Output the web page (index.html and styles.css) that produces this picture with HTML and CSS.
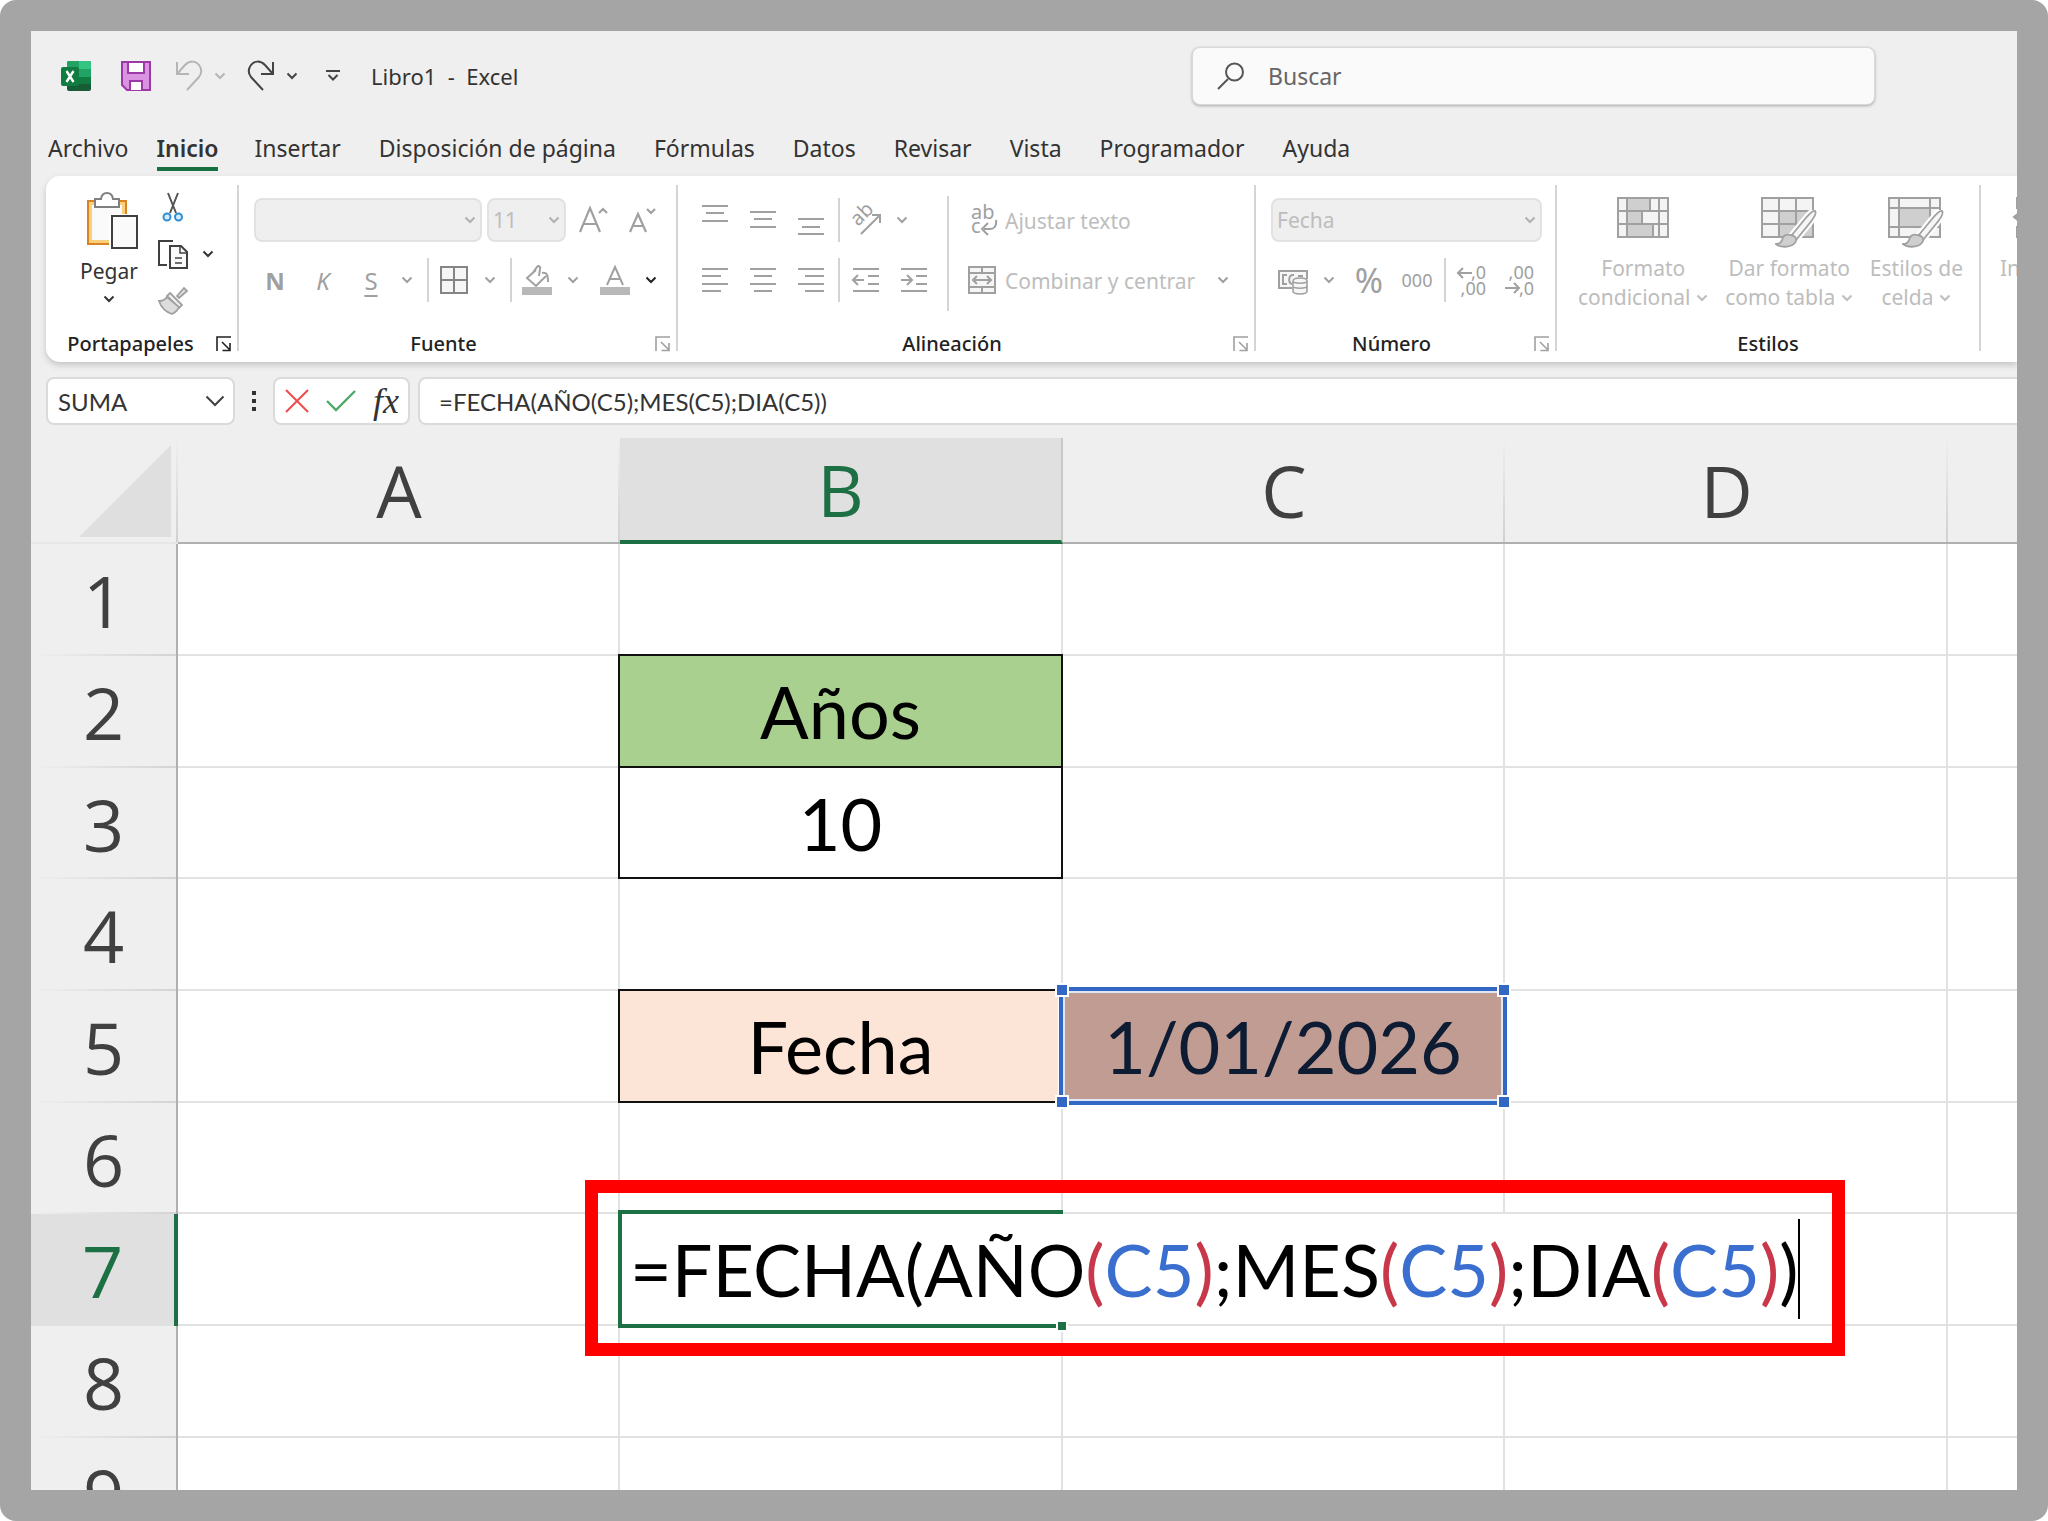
FILE: index.html
```html
<!DOCTYPE html>
<html lang="es">
<head>
    <meta charset="UTF-8">
    <meta name="viewport" content="width=device-width, initial-scale=1.0">
    <title>Libro1 - Excel</title>
    <link rel="stylesheet" href="styles.css">
</head>
<body>
    <!-- Shared icons -->
    <svg class="sprite" aria-hidden="true">
        <symbol id="chevron" viewBox="0 0 12 8"><path d="M1.5 1.5 6 6l4.500-4.500" fill="none" stroke="currentColor" stroke-width="2"/></symbol>
        <symbol id="launcher" viewBox="0 0 16 16"><path d="M1 15V1h14M6 6l8 8M14 7v7.500H6.500" fill="none" stroke="currentColor" stroke-width="1.600"/></symbol>
        <symbol id="brush" viewBox="0 0 42 38">
            <path d="M40 1c2 2-1 7-6 13L21 30l-5-4L30 9c5-6 8-9 10-8z" fill="#f6f6f6" stroke="#fff" stroke-width="6"/>
            <path d="M40 1c2 2-1 7-6 13L21 30l-5-4L30 9c5-6 8-9 10-8z" fill="#f6f6f6" stroke="#a0a0a0" stroke-width="1.800"/>
            <path d="M15 25c-4-1-7 1-8 5-1 3-3 4-6 4 5 4 17 4 20-3 1-3-2-6-6-6z" fill="#cfcfcf" stroke="#a0a0a0" stroke-width="1.800"/>
        </symbol>
    </svg>

    <div class="window">
        <header class="titlebar">
            <svg class="app-icon" width="32" height="32" viewBox="0 0 32 32" role="img" aria-label="Excel">
                <rect x="7" y="1" width="24" height="30" rx="2" fill="#185c37"/>
                <path d="M9 1h10v8H7V3a2 2 0 0 1 2-2z" fill="#21a366"/>
                <path d="M19 1h10a2 2 0 0 1 2 2v6H19z" fill="#33c481"/>
                <path d="M7 9h12v8H7z" fill="#107c41"/>
                <path d="M19 9h12v8H19z" fill="#21a366"/>
                <path d="M19 17h12v7H19z" fill="#107c41"/>
                <rect x="1" y="7" width="18" height="19" rx="2" fill="#107c41"/>
                <path d="M6.500 11l7 11M13.500 11l-7 11" stroke="#fff" stroke-width="2.400"/>
            </svg>
            <button class="quick" aria-label="Guardar">
                <svg width="32" height="32" viewBox="0 0 32 32">
                    <path d="M2 2h28v28H7l-5-5z" fill="#d993e0" stroke="#9b3aa6" stroke-width="2"/>
                    <path d="M8 2h16v11H8zM10 30v-9h12v9" fill="#fff" stroke="#9b3aa6" stroke-width="2"/>
                </svg>
            </button>
            <button class="quick undo" aria-label="Deshacer">
                <svg width="28" height="32" viewBox="0 0 28 32"><path d="M2 2v12h12M2 14l8-9c5-5 11-4 14 0s3 8 0 12L12 30" fill="none" stroke="currentColor" stroke-width="2"/></svg>
                <svg class="chevron"><use href="#chevron"/></svg>
            </button>
            <button class="quick redo" aria-label="Rehacer">
                <svg width="28" height="32" viewBox="0 0 28 32"><path d="M26 2v12H14M26 14l-8-9C13 0 7 1 4 5s-3 8 0 12l12 13" fill="none" stroke="currentColor" stroke-width="2"/></svg>
                <svg class="chevron"><use href="#chevron"/></svg>
            </button>
            <button class="quick more" aria-label="Personalizar barra">
                <svg width="14" height="14" viewBox="0 0 14 14"><path d="M0 2h14M2.500 6 7 10.500 11.500 6" fill="none" stroke="currentColor" stroke-width="2"/></svg>
            </button>
            <h1>Libro1&nbsp; -&nbsp; Excel</h1>
            <label class="search">
                <svg width="30" height="30" viewBox="0 0 30 30"><path d="M12 18 2 28" stroke="currentColor" stroke-width="2"/><circle cx="18.500" cy="11" r="8.500" fill="none" stroke="currentColor" stroke-width="2"/></svg>
                <input type="search" placeholder="Buscar" aria-label="Buscar">
            </label>
        </header>

        <nav class="tabs">
            <a href="#">Archivo</a>
            <a href="#" class="active">Inicio</a>
            <a href="#">Insertar</a>
            <a href="#">Disposición de página</a>
            <a href="#">Fórmulas</a>
            <a href="#">Datos</a>
            <a href="#">Revisar</a>
            <a href="#">Vista</a>
            <a href="#">Programador</a>
            <a href="#">Ayuda</a>
        </nav>

        <div class="ribbon">
            <section class="group clipboard">
                <div class="controls">
                    <button class="paste">
                        <svg width="52" height="58" viewBox="0 0 52 58">
                            <path d="M2 9h38v43H2z" fill="#fff" stroke="#d98324" stroke-width="2"/>
                            <path d="M4.500 11.500h33v38h-33z" fill="#fafafa" stroke="#fbd07d" stroke-width="3"/>
                            <path d="M9 15V7h6c1-8 11-8 12 0h6v8z" fill="#fff" stroke="#808080" stroke-width="2"/>
                            <path d="M23 22h29v36H23z" fill="#fff"/>
                            <path d="M26 24h25v32H26z" fill="#fafafa" stroke="#404040" stroke-width="2"/>
                        </svg>
                        <span>Pegar</span>
                        <svg class="chevron"><use href="#chevron"/></svg>
                    </button>
                    <div class="stack">
                        <button aria-label="Cortar">
                            <svg width="30" height="30" viewBox="0 0 30 30">
                                <path d="M10 1l8 20M20 1l-8 20" stroke="#555" stroke-width="2"/>
                                <circle cx="9" cy="25" r="3.500" fill="#d5ecfb" stroke="#2f8fd3" stroke-width="2"/>
                                <circle cx="20.500" cy="25" r="3.500" fill="#d5ecfb" stroke="#2f8fd3" stroke-width="2"/>
                            </svg>
                        </button>
                        <button aria-label="Copiar">
                            <svg width="30" height="30" viewBox="0 0 30 30">
                                <path d="M15 2H1v24h8" fill="none" stroke="#404040" stroke-width="2"/>
                                <path d="M12 7h11l6 6v16H12z" fill="#fafafa" stroke="#404040" stroke-width="2"/>
                                <path d="M22 7v7h7M17 19h7M17 24h7" fill="none" stroke="#404040" stroke-width="1.500"/>
                            </svg>
                            <svg class="chevron"><use href="#chevron"/></svg>
                        </button>
                        <button aria-label="Copiar formato" disabled>
                            <svg width="30" height="30" viewBox="0 0 30 30">
                                <path d="M19 10l7-8 3 3-8 7z" fill="#ddd" stroke="#a0a0a0" stroke-width="1.800"/>
                                <path d="M12 7l12 12-3 3L9 10z" fill="#f0f0f0" stroke="#a0a0a0" stroke-width="1.800"/>
                                <path d="M9 11c-2 3-5 4-8 4 2 6 7 11 13 13 4-2 6-4 7-7z" fill="#ddd" stroke="#a0a0a0" stroke-width="1.800"/>
                            </svg>
                        </button>
                    </div>
                </div>
                <footer><span>Portapapeles</span><button class="launcher" aria-label="Opciones de portapapeles"><svg><use href="#launcher"/></svg></button></footer>
            </section>

            <section class="group font">
                <div class="controls">
                    <div class="row fields">
                        <div class="combo font-name">
                            <select aria-label="Fuente" disabled><option></option></select>
                            <svg class="chevron"><use href="#chevron"/></svg>
                        </div>
                        <div class="combo font-size">
                            <select aria-label="Tamaño de fuente" disabled><option>11</option></select>
                            <svg class="chevron"><use href="#chevron"/></svg>
                        </div>
                        <button class="tool" aria-label="Aumentar tamaño" disabled>
                            <svg width="30" height="30" viewBox="0 0 30 30"><path d="M1 27 11 3l10 24M5 19h12M20 8l4-4 4 4" fill="none" stroke="currentColor" stroke-width="2.200"/></svg>
                        </button>
                        <button class="tool" aria-label="Disminuir tamaño" disabled>
                            <svg width="30" height="30" viewBox="0 0 30 30"><path d="M3 27 11 9l8 18M6 21h10M20 4l4 4 4-4" fill="none" stroke="currentColor" stroke-width="2.200"/></svg>
                        </button>
                    </div>
                    <div class="row">
                        <button class="tool bold" disabled>N</button>
                        <button class="tool italic" disabled>K</button>
                        <button class="tool underline" disabled>S</button>
                        <button class="drop" aria-label="Más subrayados" disabled><svg class="chevron"><use href="#chevron"/></svg></button>
                        <span class="sep"></span>
                        <button class="tool" aria-label="Bordes" disabled>
                            <svg width="28" height="28" viewBox="0 0 28 28"><path d="M1 1h26v26H1zM14 1v26M1 14h26" fill="#f6f6f6" stroke="#858585" stroke-width="2"/></svg>
                        </button>
                        <button class="drop" aria-label="Más bordes" disabled><svg class="chevron"><use href="#chevron"/></svg></button>
                        <span class="sep"></span>
                        <button class="tool" aria-label="Color de relleno" disabled>
                            <svg width="30" height="30" viewBox="0 0 30 30">
                                <path d="M14 5 5 13l9 8 10-10M10 9l5-7c2-2 4 0 3 2l-1 7M20 8c5-1 6 2 6 9" fill="none" stroke="currentColor" stroke-width="2"/>
                                <path d="M0 22h30v8H0z" fill="#b8b8b8"/>
                            </svg>
                        </button>
                        <button class="drop" aria-label="Más colores de relleno" disabled><svg class="chevron"><use href="#chevron"/></svg></button>
                        <button class="tool" aria-label="Color de fuente" disabled>
                            <svg width="30" height="30" viewBox="0 0 30 30"><path d="M7 20l8-18 8 18M10 14h10" fill="none" stroke="currentColor" stroke-width="2"/><path d="M0 22h30v8H0z" fill="#b8b8b8"/></svg>
                        </button>
                        <button class="drop" aria-label="Más colores de fuente"><svg class="chevron"><use href="#chevron"/></svg></button>
                    </div>
                </div>
                <footer><span>Fuente</span><button class="launcher" aria-label="Opciones de fuente" disabled><svg><use href="#launcher"/></svg></button></footer>
            </section>

            <section class="group align">
                <div class="controls">
                    <div>
                        <div class="row">
                            <button class="tool" aria-label="Alinear arriba" disabled><svg width="26" height="32" viewBox="0 0 26 32"><path d="M0 2h26M4 9h18M0 17h26" stroke="currentColor" stroke-width="2"/></svg></button>
                            <button class="tool" aria-label="Alinear en medio" disabled><svg width="26" height="32" viewBox="0 0 26 32"><path d="M0 8h26M4 15h18M0 23h26" stroke="currentColor" stroke-width="2"/></svg></button>
                            <button class="tool" aria-label="Alinear abajo" disabled><svg width="26" height="32" viewBox="0 0 26 32"><path d="M0 15h26M4 23h18M0 30h26" stroke="currentColor" stroke-width="2"/></svg></button>
                            <span class="sep"></span>
                            <button class="tool" aria-label="Orientación" disabled>
                                <svg width="32" height="32" viewBox="0 0 32 32">
                                    <text transform="translate(8 23) rotate(-45)" font-size="20" fill="currentColor">ab</text>
                                    <path d="M11 30 30 11M22 11h8v8" fill="none" stroke="currentColor" stroke-width="2"/>
                                </svg>
                            </button>
                            <button class="drop" aria-label="Más orientaciones" disabled><svg class="chevron"><use href="#chevron"/></svg></button>
                        </div>
                        <div class="row">
                            <button class="tool" aria-label="Alinear a la izquierda" disabled><svg width="26" height="26" viewBox="0 0 26 26"><path d="M0 2h26M0 9h19M0 17h26M0 24h19" stroke="currentColor" stroke-width="2"/></svg></button>
                            <button class="tool" aria-label="Centrar" disabled><svg width="26" height="26" viewBox="0 0 26 26"><path d="M0 2h26M4 9h18M0 17h26M4 24h18" stroke="currentColor" stroke-width="2"/></svg></button>
                            <button class="tool" aria-label="Alinear a la derecha" disabled><svg width="26" height="26" viewBox="0 0 26 26"><path d="M0 2h26M7 9h19M0 17h26M7 24h19" stroke="currentColor" stroke-width="2"/></svg></button>
                            <span class="sep"></span>
                            <button class="tool" aria-label="Disminuir sangría" disabled><svg width="26" height="26" viewBox="0 0 26 26"><path d="M0 2h26M15 9h11M15 17h11M0 24h26M11 13H1M5 8l-5 5 5 5" fill="none" stroke="currentColor" stroke-width="2"/></svg></button>
                            <button class="tool" aria-label="Aumentar sangría" disabled><svg width="26" height="26" viewBox="0 0 26 26"><path d="M0 2h26M15 9h11M15 17h11M0 24h26M0 13h10M6 8l5 5-5 5" fill="none" stroke="currentColor" stroke-width="2"/></svg></button>
                        </div>
                    </div>
                    <span class="sep tall"></span>
                    <div>
                        <div class="row">
                            <button class="wide" disabled>
                                <svg width="30" height="34" viewBox="0 0 30 34">
                                    <text x="4" y="16" font-size="20" fill="currentColor">ab</text>
                                    <text x="4" y="30" font-size="20" fill="currentColor">c</text>
                                    <path d="M29 17c1 6-2 9-6 9h-6M21 20l-6 6 6 6" fill="none" stroke="currentColor" stroke-width="2"/>
                                </svg>
                                <span>Ajustar texto</span>
                            </button>
                        </div>
                        <div class="row">
                            <button class="wide" disabled>
                                <svg width="30" height="28" viewBox="0 0 30 28">
                                    <path d="M2 1h26v26H2zM2 7h26M2 21h26M15 1v6M15 21v6" fill="#f6f6f6" stroke="currentColor" stroke-width="2"/>
                                    <path d="M6 14h18M10 10l-4 4 4 4M20 10l4 4-4 4" fill="none" stroke="currentColor" stroke-width="2"/>
                                </svg>
                                <span>Combinar y centrar</span>
                            </button>
                            <button class="drop" aria-label="Más opciones de combinar" disabled><svg class="chevron"><use href="#chevron"/></svg></button>
                        </div>
                    </div>
                </div>
                <footer><span>Alineación</span><button class="launcher" aria-label="Opciones de alineación" disabled><svg><use href="#launcher"/></svg></button></footer>
            </section>

            <section class="group number">
                <div class="controls">
                    <div class="row fields">
                        <div class="combo">
                            <select aria-label="Formato de número" disabled><option>Fecha</option></select>
                            <svg class="chevron"><use href="#chevron"/></svg>
                        </div>
                    </div>
                    <div class="row">
                        <button class="tool" aria-label="Formato de contabilidad" disabled>
                            <svg width="30" height="30" viewBox="0 0 30 30">
                                <path d="M14 23H1V6h28v8" fill="#f6f6f6" stroke="currentColor" stroke-width="2"/>
                                <path d="M9 10H5v9h4M16 10c-6-1-6 8-2 9M20 11h5" fill="none" stroke="currentColor" stroke-width="2"/>
                                <path d="M15 16v10c0 4 14 4 14 0V16c0-4-14-4-14 0c0 3 14 3 14 0M15 21c0 3 14 3 14 0" fill="#f6f6f6" stroke="currentColor" stroke-width="1.600"/>
                            </svg>
                        </button>
                        <button class="drop" aria-label="Más formatos" disabled><svg class="chevron"><use href="#chevron"/></svg></button>
                        <button class="tool percent" disabled>%</button>
                        <button class="tool thousands" disabled>000</button>
                        <span class="sep"></span>
                        <button class="tool" aria-label="Aumentar decimales" disabled>
                            <svg width="30" height="32" viewBox="0 0 30 32">
                                <text x="29" y="15" text-anchor="end" font-size="18" fill="currentColor">,0</text>
                                <text x="29" y="31" text-anchor="end" font-size="18" fill="currentColor">,00</text>
                                <path d="M15 9H1M6 4 1 9l5 5" fill="none" stroke="currentColor" stroke-width="2"/>
                            </svg>
                        </button>
                        <button class="tool" aria-label="Disminuir decimales" disabled>
                            <svg width="30" height="32" viewBox="0 0 30 32">
                                <text x="29" y="15" text-anchor="end" font-size="18" fill="currentColor">,00</text>
                                <text x="29" y="31" text-anchor="end" font-size="18" fill="currentColor">,0</text>
                                <path d="M0 24h14M9 19l5 5-5 5" fill="none" stroke="currentColor" stroke-width="2"/>
                            </svg>
                        </button>
                    </div>
                </div>
                <footer><span>Número</span><button class="launcher" aria-label="Opciones de número" disabled><svg><use href="#launcher"/></svg></button></footer>
            </section>

            <section class="group styles">
                <div class="controls">
                    <button class="big" disabled>
                        <svg width="56" height="52" viewBox="0 0 56 52">
                            <path d="M3 2h50v39H3zM3 15h50M3 28h50M12 2v39M44 2v39" fill="#f4f4f4" stroke="#a0a0a0" stroke-width="2"/>
                            <path d="M12 2h23v13H12zM12 15h15v13H12zM12 28h26v13H12z" fill="#cfcfcf" stroke="#a0a0a0" stroke-width="2"/>
                        </svg>
                        <span>Formato</span>
                        <span>condicional <svg class="chevron"><use href="#chevron"/></svg></span>
                    </button>
                    <button class="big" disabled>
                        <svg width="56" height="52" viewBox="0 0 56 52">
                            <path d="M1 2h51v39H1z" fill="#f4f4f4"/>
                            <path d="M18 15h34v26H18z" fill="#cfcfcf"/>
                            <path d="M1 2h51v39H1zM1 15h51M1 28h51M18 2v39M35 2v39" fill="none" stroke="#a0a0a0" stroke-width="2"/>
                            <use href="#brush" x="14" y="14" width="42" height="38"/>
                        </svg>
                        <span>Dar formato</span>
                        <span>como tabla <svg class="chevron"><use href="#chevron"/></svg></span>
                    </button>
                    <button class="big" disabled>
                        <svg width="56" height="52" viewBox="0 0 56 52">
                            <path d="M1 2h51v39H1z" fill="#f4f4f4"/>
                            <path d="M11 12h31v19H11z" fill="#cfcfcf"/>
                            <path d="M1 2h51v39H1zM1 12h51M1 31h51M11 2v39M42 2v39" fill="none" stroke="#a0a0a0" stroke-width="2"/>
                            <use href="#brush" x="14" y="14" width="42" height="38"/>
                        </svg>
                        <span>Estilos de</span>
                        <span>celda <svg class="chevron"><use href="#chevron"/></svg></span>
                    </button>
                </div>
                <footer><span>Estilos</span></footer>
            </section>

            <section class="group cells">
                <div class="controls">
                    <button class="big" disabled>
                        <svg width="56" height="52" viewBox="0 0 56 52">
                            <path d="M6 13V2h48v39H6V30M20 2v39M6 13h48M6 30h48" fill="none" stroke="#a0a0a0" stroke-width="2"/>
                            <path d="M14 12 3 21l11 9M3 21h30" fill="none" stroke="#a0a0a0" stroke-width="2"/>
                        </svg>
                        <span>Insertar</span>
                    </button>
                </div>
            </section>
        </div>

        <div class="formula-bar">
            <div class="combo name-box">
                <select aria-label="Cuadro de nombres"><option>SUMA</option></select>
                <svg width="20" height="12" viewBox="0 0 20 12"><path d="M1.500 1.500 10 10l8.500-8.500" fill="none" stroke="#404040" stroke-width="2"/></svg>
            </div>
            <svg class="dots" width="4" height="20" viewBox="0 0 4 20"><path d="M0 0h4v4H0zM0 8h4v4H0zM0 16h4v4H0z" fill="#333"/></svg>
            <div class="entry">
                <button aria-label="Cancelar"><svg width="24" height="24" viewBox="0 0 24 24"><path d="M1 1l22 22M23 1 1 23" stroke="#f04b4b" stroke-width="2"/></svg></button>
                <button aria-label="Introducir"><svg width="30" height="24" viewBox="0 0 30 24"><path d="M1 12l9 9L29 2" fill="none" stroke="#4fa865" stroke-width="2.400"/></svg></button>
                <button class="fx" aria-label="Insertar función">fx</button>
            </div>
            <input class="formula" type="text" aria-label="Barra de fórmulas" value="=FECHA(AÑO(C5);MES(C5);DIA(C5))">
        </div>

        <div class="sheet">
            <table>
                <colgroup>
                    <col class="col-head"><col class="col-data"><col class="col-data"><col class="col-data"><col class="col-data"><col>
                </colgroup>
                <thead>
                    <tr>
                        <th class="corner"><svg width="92" height="92" viewBox="0 0 92 92"><path d="M92 0v92H0z" fill="#dfdfdf"/></svg></th>
                        <th>A</th>
                        <th class="current">B</th>
                        <th>C</th>
                        <th>D</th>
                        <th></th>
                    </tr>
                </thead>
                <tbody>
                    <tr><th>1</th><td></td><td></td><td></td><td></td><td></td></tr>
                    <tr><th>2</th><td></td><td class="boxed green">Años</td><td></td><td></td><td></td></tr>
                    <tr><th>3</th><td></td><td class="boxed">10</td><td></td><td></td><td></td></tr>
                    <tr><th>4</th><td></td><td></td><td></td><td></td><td></td></tr>
                    <tr>
                        <th>5</th><td></td>
                        <td class="boxed peach">Fecha</td>
                        <td class="reference">1/01/2026<span class="handles"><i></i><i></i><i></i><i></i></span></td>
                        <td></td><td></td>
                    </tr>
                    <tr><th>6</th><td></td><td></td><td></td><td></td><td></td></tr>
                    <tr>
                        <th class="current">7</th><td></td>
                        <td class="editing">
                            <div class="editor" role="textbox" aria-label="B7">=FECHA(AÑO<span class="paren">(</span><span class="ref">C5</span><span class="paren">)</span>;MES<span class="paren">(</span><span class="ref">C5</span><span class="paren">)</span>;DIA<span class="paren">(</span><span class="ref">C5</span><span class="paren">)</span>)<span class="caret"></span></div>
                            <div class="highlight"></div>
                        </td>
                        <td></td><td></td><td></td>
                    </tr>
                    <tr><th>8</th><td></td><td></td><td></td><td></td><td></td></tr>
                    <tr><th>9</th><td></td><td></td><td></td><td></td><td></td></tr>
                </tbody>
            </table>
        </div>
    </div>
</body>
</html>
```
FILE: styles.css
```css
* {
    box-sizing: border-box;
}
body {
    margin: 0;
    background: #fff;
    color: #333;
    font-family: "Noto Sans", "Open Sans", sans-serif;
    font-size: 23px;
}
button, input, select {
    font: inherit;
    color: inherit;
    border: none;
    background: none;
    padding: 0;
    margin: 0;
}
button {
    display: flex;
    align-items: center;
    justify-content: center;
    cursor: pointer;
}
svg {
    display: block;
    flex: none;
    overflow: visible;
}
.sprite {
    position: absolute;
    width: 0;
    height: 0;
}
.chevron {
    width: 12px;
    height: 8px;
}

/* Window frame */
.window {
    display: flex;
    flex-direction: column;
    height: 100vh;
    overflow: hidden;
    border: 31px solid #a5a5a5;
    border-radius: 16px;
    background: #efefef;
}

/* Title bar */
.titlebar {
    display: flex;
    flex: none;
    align-items: center;
    height: 90px;
    padding: 0 142px 0 29px;
}
.titlebar h1 {
    margin: 0 0 0 31px;
    font-size: 22px;
    font-weight: 400;
    white-space: nowrap;
}
.quick {
    gap: 11px;
    margin-left: 23px;
    color: #444;
}
.app-icon + .quick {
    margin-left: 28px;
}
.undo {
    color: #b5b5b5;
}
.redo {
    margin-left: 21px;
}
.more {
    margin-left: 28px;
}
.search {
    display: flex;
    align-items: center;
    gap: 22px;
    width: 683px;
    height: 58px;
    margin-left: auto;
    padding: 0 23px;
    border: 1px solid #d8d8d8;
    border-radius: 8px;
    background: #fafafa;
    box-shadow: 0 1px 3px #aaa;
    color: #555;
}
.search input {
    flex: 1;
    outline: none;
}
.search input::placeholder {
    color: #666;
    opacity: 1;
}

/* Tabs */
.tabs {
    display: flex;
    flex: none;
    gap: 38px;
    height: 50px;
    margin-bottom: 5px;
    padding: 8px 17px 0;
}
.tabs a {
    display: flex;
    align-items: center;
    color: #333;
    text-decoration: none;
    white-space: nowrap;
    border-bottom: 4px solid transparent;
}
.tabs .active {
    margin: 0 -2px 0 -10px;
    font-weight: 600;
    border-color: #17703f;
}

/* Ribbon */
.ribbon {
    display: flex;
    flex: none;
    height: 186px;
    margin-left: 15px;
    padding: 9px 0 11px;
    overflow: hidden;
    border-radius: 14px 0 0 14px;
    background: #fff;
    box-shadow: 0 3px 6px #c4c4c4;
    font-size: 21px;
}
.group {
    display: flex;
    flex: none;
    flex-direction: column;
    justify-content: space-between;
    border-right: 2px solid #d4d4d4;
}
.clipboard { width: 193px; }
.font { width: 439px; }
.align { width: 578px; }
.number { width: 301px; }
.styles { width: 424px; }
.cells { border: none; }
.group footer {
    position: relative;
    display: flex;
    justify-content: center;
    height: 15px;
    padding-right: 28px;
    color: #222;
    font-size: 20px;
    font-weight: 500;
    line-height: 16px;
}
.clipboard footer {
    padding-right: 22px;
}
.styles footer {
    padding-right: 0;
}
.launcher {
    position: absolute;
    right: 5px;
    top: 0;
}
.launcher svg {
    width: 16px;
    height: 16px;
}
button:disabled {
    color: #a0a0a0;
    cursor: default;
}
.row {
    display: flex;
    align-items: center;
    height: 44px;
    margin-top: 16px;
}
.row:first-child {
    margin-top: 13px;
}
.tool {
    width: 48px;
    height: 44px;
}
.drop {
    width: 24px;
    height: 44px;
}
.sep {
    width: 2px;
    height: 44px;
    margin: 0 2px 0 3px;
    background: #d4d4d4;
}
.combo {
    display: grid;
    align-items: center;
}
.combo > * {
    grid-area: 1 / 1;
}
.combo select {
    width: 100%;
    height: 44px;
    padding: 0 4px;
    border: 2px solid #e2e2e2;
    border-radius: 8px;
    background: #efefef;
    appearance: none;
    opacity: 1;
}
.combo select:disabled {
    color: #bdbdbd;
}
.combo svg {
    justify-self: end;
    margin-right: 6px;
    color: #b0b0b0;
    pointer-events: none;
}

/* Clipboard group */
.clipboard .controls {
    display: flex;
    gap: 20px;
    padding: 7px 0 0 34px;
}
.paste {
    flex-direction: column;
    justify-content: flex-start;
    width: 58px;
    color: #333;
}
.paste > svg:first-child {
    align-self: flex-end;
}
.paste span {
    line-height: 28px;
    margin: 7px 0 10px;
}
.stack {
    display: flex;
    flex-direction: column;
    gap: 17px;
}
.stack button {
    justify-content: flex-start;
    gap: 14px;
}

/* Font group */
.font .controls {
    padding-left: 12px;
}
.font .fields {
    padding-left: 3px;
}
.font-name {
    width: 228px;
    margin-right: 5px;
}
.font-size {
    width: 79px;
    margin-right: 4px;
}
.font .sep {
    margin: 0 1px 0 8px;
}
.font .drop + .tool {
    margin-left: 6px;
}
.bold, .italic, .underline { font-size: 24px; }
.bold { font-weight: 700; }
.italic { font-style: italic; }
.underline { text-decoration: underline; text-underline-offset: 5px; }
.drop:last-child:enabled {
    color: #222;
}

/* Alignment group */
.align .controls {
    display: flex;
    padding-left: 13px;
}
.align .tall {
    height: 115px;
    margin: 11px 18px 0 9px;
}
.wide {
    gap: 8px;
}
.wide span {
    padding-top: 2px;
    color: #bdbdbd;
}
.wide + .drop {
    margin-left: 16px;
}

/* Number group */
.number .controls {
    padding-left: 13px;
}
.number .drop + .tool {
    margin-left: 4px;
}
.number .fields .combo {
    flex: 1;
    margin: 0 13px 0 2px;
}
.percent { font-size: 34px; }
.thousands { font-size: 18px; }

/* Styles group */
.styles .controls {
    display: flex;
    justify-content: space-between;
    padding: 11px 16px 0 21px;
}
.big {
    flex-direction: column;
    justify-content: flex-start;
}
.big > svg {
    margin-bottom: 6px;
}
.big span {
    display: flex;
    align-items: center;
    gap: 6px;
    color: #bdbdbd;
    line-height: 29px;
    white-space: nowrap;
}
.cells .controls {
    padding: 11px 0 0 19px;
}

/* Formula bar */
.formula-bar {
    display: flex;
    flex: none;
    align-items: center;
    height: 48px;
    margin: 15px 0 13px 15px;
    font-family: Lato, sans-serif;
    font-size: 24px;
}
.name-box {
    width: 189px;
}
.combo.name-box select,
.entry,
.formula {
    height: 48px;
    border: 2px solid #dadada;
    border-radius: 8px;
    background: #fff;
}
.name-box select {
    padding: 0 10px;
}
.name-box svg {
    margin-right: 10px;
}
.dots {
    margin: 0 17px;
}
.entry {
    display: flex;
    align-items: center;
    justify-content: space-between;
    width: 137px;
    padding: 0 9px 0 10px;
}
.fx {
    font-family: "Liberation Serif", serif;
    font-size: 36px;
    font-style: italic;
    line-height: 40px;
}
.formula {
    flex: 1;
    min-width: 0;
    margin-left: 8px;
    padding: 0 19px;
    border-right: none;
    border-radius: 8px 0 0 8px;
}

/* Sheet */
.sheet {
    flex: 1;
    min-height: 0;
    overflow: hidden;
    background: #fff;
}
table {
    width: 100%;
    table-layout: fixed;
    border-spacing: 0;
}
.col-head { width: 147px; }
.col-data { width: 442px; }
.col-data:nth-child(odd) { width: 443px; }
th, td {
    padding: 0;
    font-size: 72px;
    font-weight: 400;
    line-height: 100px;
    text-align: center;
    white-space: nowrap;
}
th {
    background: #efefef;
    color: #404040;
    font-family: "Open Sans", sans-serif;
}
thead th {
    height: 106px;
    border-bottom: 2px solid #b0b0b0;
    background:
        linear-gradient(#efefef, #d0d0d0) right / 2px 100% no-repeat,
        #efefef;
}
thead .current {
    border-bottom: 4px solid #1d7044;
    border-right: 2px solid #c8c8c8;
    background: #e0e0e0;
}
.current {
    color: #1d7044;
}
thead .corner {
    vertical-align: bottom;
    padding: 0 7px 5px 0;
    border-bottom-color: #e6e6e6;
}
.corner svg {
    margin-left: auto;
}
tbody tr {
    height: 112px;
}
tbody tr:nth-child(3n) {
    height: 111px;
}
tbody th {
    border-right: 2px solid #b0b0b0;
    background: linear-gradient(90deg, #efefef, #d4d4d4) bottom / 100% 2px no-repeat #efefef;
}
tbody .current {
    border-right: 4px solid #1d7044;
    background: #e0e0e0;
}
td {
    position: relative;
    border-right: 2px solid #e2e2e2;
    border-bottom: 2px solid #e2e2e2;
    background: #fff;
    background-clip: padding-box;
    color: #000;
    font-family: Lato, sans-serif;
}
thead th:last-child {
    background: #efefef;
}
td:last-child {
    border-right: none;
}
.boxed::after {
    content: "";
    position: absolute;
    inset: -2px;
    border: 2px solid #111;
}
.green { background-color: #a9d08e; }
.peach { background-color: #fce4d6; }
.reference {
    background-color: #c19c93;
    color: #0d1b33;
}

/* Blue outline of the cell used by the formula */
.handles {
    position: absolute;
    z-index: 1;
    inset: -4px;
    border: 4px solid #3367c4;
    outline: 1px solid #fff;
    box-shadow: inset 0 0 0 2px #dfe6f5;
}
.handles i {
    position: absolute;
    width: 10px;
    height: 10px;
    background: #3367c4;
    outline: 2px solid #fff;
}
.handles i:nth-child(odd) { left: -6px; }
.handles i:nth-child(even) { right: -6px; }
.handles i:nth-child(-n+2) { top: -6px; }
.handles i:nth-child(n+3) { bottom: -6px; }

/* Cell being edited, its text runs over the next columns */
.editing {
    z-index: 2;
}
.editing::before {
    content: "";
    position: absolute;
    inset: -4px -2px;
    border: 4px solid #1d7044;
    border-right: none;
}
.editing::after {
    content: "";
    position: absolute;
    z-index: 1;
    right: -5px;
    bottom: -6px;
    width: 8px;
    height: 8px;
    background: #1d7044;
    outline: 2px solid #fff;
}
.editor {
    position: absolute;
    left: 2px;
    top: 0;
    display: flex;
    align-items: center;
    height: 100%;
    padding-left: 8px;
    background: #fff;
}
.paren { color: #c8374a; }
.ref { color: #3a6fd0; }
.caret {
    width: 2px;
    height: 100px;
    background: #000;
}
.highlight {
    position: absolute;
    left: -35px;
    top: -34px;
    width: 1260px;
    height: 176px;
    border: 13px solid #ff0000;
}
```
